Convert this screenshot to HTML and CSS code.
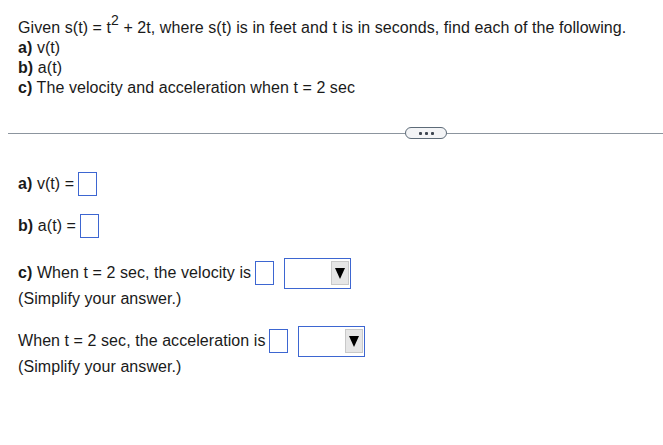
FILE: index.html
```html
<!DOCTYPE html>
<html>
<head>
<meta charset="utf-8">
<link rel="stylesheet" href="styles.css">
</head>
<body>
<div class="page">
  <div class="question">
    <div class="line">Given s(t) = t<sup class="sup">2</sup> + 2t, where s(t) is in feet and t is in seconds, find each of the following.</div>
    <div class="line"><b>a)</b> v(t)</div>
    <div class="line"><b>b)</b> a(t)</div>
    <div class="line"><b>c)</b> The velocity and acceleration when t = 2 sec</div>
  </div>
  <div class="sep">
    <div class="rule rule-left"></div>
    <div class="more"><span class="dot"></span><span class="dot"></span><span class="dot"></span></div>
    <div class="rule rule-right"></div>
  </div>
  <div class="answers">
    <div class="row row-a"><span><b>a)</b> v(t) =</span><span class="box"></span></div>
    <div class="row row-b"><span><b>b)</b> a(t) =</span><span class="box"></span></div>
    <div class="row row-c"><span><b>c)</b> When t = 2 sec, the velocity is</span><span class="box"></span><span class="select"><span class="arrow"></span></span></div>
    <div class="line note">(Simplify your answer.)</div>
    <div class="row row-d"><span>When t = 2 sec, the acceleration is</span><span class="box"></span><span class="select"><span class="arrow"></span></span></div>
    <div class="line note">(Simplify your answer.)</div>
  </div>
</div>
</body>
</html>
```
FILE: styles.css
```css
html, body {
  margin: 0;
  padding: 0;
  background: #ffffff;
}
body {
  font-family: "Liberation Sans", Arial, sans-serif;
  font-size: 16px;
  letter-spacing: 0.07px;
  color: #1a1a1a;
}
.page {
  padding-top: 18px;
}
.question, .answers {
  padding-left: 18px;
}
.line {
  line-height: 20px;
  height: 20px;
  white-space: nowrap;
}
.sup {
  font-size: 14px;
  line-height: 0;
  position: relative;
  top: -2px;
  vertical-align: super;
}
.sep {
  display: flex;
  align-items: center;
  margin-top: 29px;
  margin-left: 8px;
  height: 12px;
}
.rule {
  height: 1px;
  background: #8c959e;
}
.rule-left {
  width: 397px;
}
.rule-right {
  flex: 1;
}
.more {
  box-sizing: border-box;
  width: 42px;
  height: 12px;
  border: 1px solid #5d6b78;
  border-radius: 6px;
  background: #f3f4f6;
  display: flex;
  align-items: center;
  justify-content: center;
  gap: 3px;
}
.dot {
  width: 3px;
  height: 3px;
  background: #3e4650;
  border-radius: 1px;
}
.row {
  display: flex;
  align-items: center;
  white-space: nowrap;
}
.row-a { margin-top: 33px; height: 24px; }
.row-b { margin-top: 18px; height: 24px; }
.row-c { margin-top: 20px; height: 30px; }
.row-d { margin-top: 17px; height: 30px; }
.note { margin-top: 1px; }
.box {
  box-sizing: border-box;
  width: 19px;
  height: 24px;
  border: 1px solid #3d66d1;
  margin-left: 4px;
  background: #fff;
}
.select {
  box-sizing: border-box;
  width: 67px;
  height: 31px;
  border: 1px solid #3d66d1;
  margin-left: 10px;
  display: flex;
  justify-content: flex-end;
  align-items: center;
  padding-right: 1px;
  background: #fff;
}
.arrow {
  box-sizing: border-box;
  width: 18px;
  height: 24px;
  background: #e6e6e6;
  border: 1px solid #c9c9c9;
  position: relative;
}
.arrow::after {
  content: "";
  position: absolute;
  left: 3px;
  top: 6px;
  border-left: 5px solid transparent;
  border-right: 5px solid transparent;
  border-top: 11px solid #000;
}
```
